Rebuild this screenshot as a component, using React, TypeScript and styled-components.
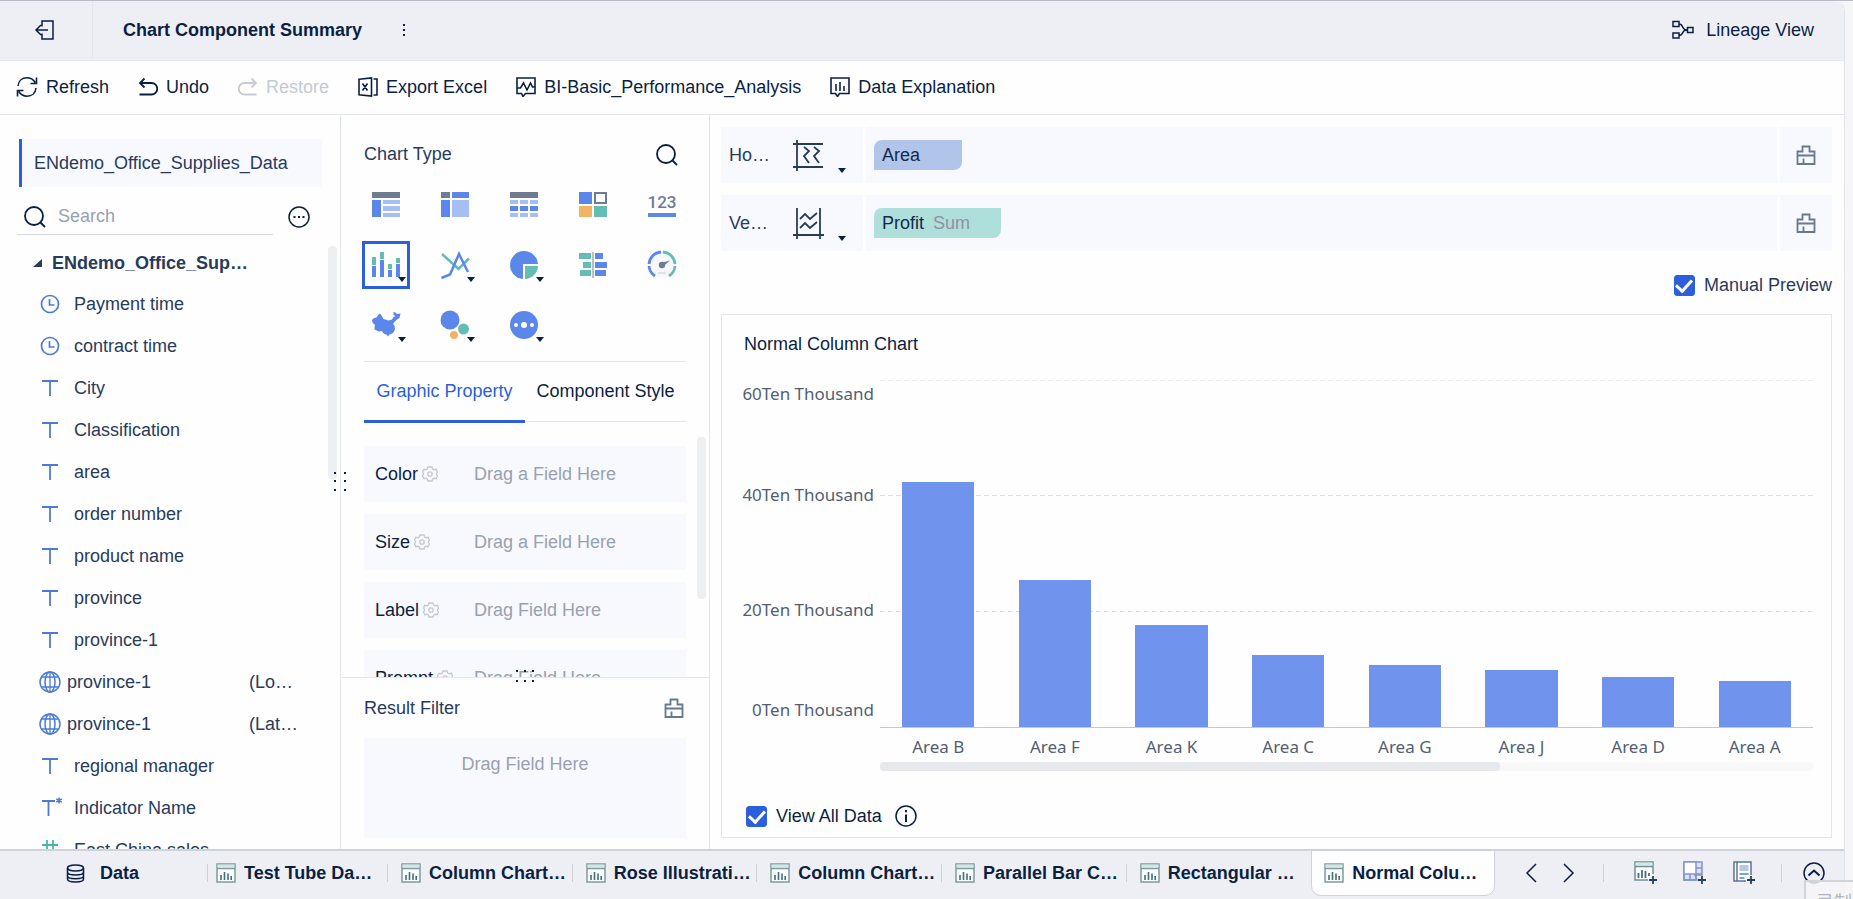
import React from "react";
import styled, { createGlobalStyle, css } from "styled-components";

const ink = "#0b1f43";
const inkSoft = "#283b5b";
const blue = "#2b5fdb";
const muted = "#98a1b2";
const line = "#e3e5ef";
const field = "#f8f9fe";
const bar = "#eeeff5";
const steel = "#68788f";

const GlobalStyle = createGlobalStyle`
  * { box-sizing: border-box; }
  body {
    margin: 0;
    background: #f6f6f8;
    color: ${inkSoft};
    font: 18px/24px "Liberation Sans", Arial, sans-serif;
  }
  button, input { font: inherit; color: inherit; }
  button { padding: 0; border: 0; background: none; cursor: pointer; }
  svg { display: block; flex: none; }
`;

/* ---------- frame ---------- */

const Page = styled.div`
  height: 100vh;
  min-height: 700px;
  border-top: 1px solid #b9bac6;
  padding-right: 8px;
  overflow: hidden;
  position: relative;
`;

const Frame = styled.div`
  height: 100%;
  display: flex;
  flex-direction: column;
  background: #fefefe;
  border-right: 1px solid #e2e3ea;
  border-top-right-radius: 10px;
  overflow: hidden;
`;

const Header = styled.header`
  flex: none;
  display: flex;
  align-items: center;
  height: 60px;
  padding-bottom: 2px;
  background: ${bar};
  border-bottom: 1px solid ${line};
  color: ${ink};
`;

const ExitButton = styled.button`
  display: flex;
  align-items: center;
  align-self: stretch;
  width: 93px;
  padding-left: 34px;
  border-right: 1px solid ${line};
`;

const PageTitle = styled.h1`
  margin: 0 36px 0 30px;
  font-size: 18px;
  line-height: 24px;
`;

const LineageLink = styled.a`
  display: flex;
  align-items: center;
  gap: 12px;
  margin-left: auto;
  margin-right: 30px;
  color: inherit;
  text-decoration: none;
`;

const Toolbar = styled.nav`
  flex: none;
  display: flex;
  align-items: center;
  gap: 29px;
  height: 54px;
  padding-left: 16px;
  padding-bottom: 2px;
  border-bottom: 1px solid ${line};
  color: ${ink};
`;

const ToolButton = styled.button`
  display: flex;
  align-items: center;
  gap: 8px;
  white-space: nowrap;
  &:disabled { color: #c5cad4; }
`;

const Body = styled.div`
  flex: 1;
  min-height: 0;
  display: flex;
`;

const DragDots = styled.span<{ $horizontal?: boolean }>`
  position: absolute;
  z-index: 2;
  color: ${ink};
  ${(p) =>
    p.$horizontal
      ? css`left: 50%; bottom: -5px; margin-left: -9px;`
      : css`right: -6px; top: 50%; margin-top: -10px;`}
`;

const Thumb = styled.span<{ $height: string; $top: number; $right: number }>`
  position: absolute;
  top: ${(p) => p.$top}px;
  right: ${(p) => p.$right}px;
  width: 9px;
  height: ${(p) => p.$height};
  border-radius: 4px;
  background: #edeff1;
`;

/* ---------- data panel ---------- */

const DataPanel = styled.aside`
  position: relative;
  flex: none;
  display: flex;
  flex-direction: column;
  width: 341px;
  padding-top: 24px;
  border-right: 1px solid ${line};
`;

const Dataset = styled.button`
  flex: none;
  height: 48px;
  margin: 0 18px 0 19px;
  padding-left: 12px;
  border-left: 3px solid ${blue};
  background: ${field};
  text-align: left;
`;

const SearchRow = styled.div`
  flex: none;
  display: flex;
  align-items: center;
  gap: 14px;
  height: 48px;
  padding: 0 29px 0 17px;
  color: ${ink};
  > button { margin-top: 12px; }
`;

const SearchBox = styled.label`
  flex: 1;
  display: flex;
  align-items: center;
  gap: 12px;
  height: 48px;
  min-width: 0;
  padding-left: 6px;
  padding-top: 11px;
  border-bottom: 1px solid #d9dbe4;
`;

const SearchInput = styled.input`
  flex: 1;
  min-width: 0;
  padding: 0;
  border: 0;
  outline: 0;
  background: none;
  &::placeholder { color: ${muted}; opacity: 1; }
`;

const Tree = styled.div`
  position: relative;
  flex: 1;
  min-height: 0;
  padding-top: 7px;
  overflow: hidden;
`;

const TreeHead = styled.button`
  display: flex;
  align-items: center;
  gap: 10px;
  height: 41px;
  padding-left: 33px;
  font-weight: bold;
`;

const FieldList = styled.ul`
  margin: 0;
  padding: 0;
  list-style: none;
`;

const FieldRow = styled.li<{ $geo?: boolean }>`
  display: flex;
  align-items: center;
  gap: ${(p) => (p.$geo ? 5 : 12)}px;
  height: 42px;
  padding-left: 38px;
`;

const FieldName = styled.span<{ $geo?: boolean }>`
  width: ${(p) => (p.$geo ? "177px" : "auto")};
  white-space: nowrap;
`;

/* ---------- settings panel ---------- */

const Settings = styled.section`
  flex: none;
  display: flex;
  flex-direction: column;
  width: 369px;
  border-right: 1px solid ${line};
`;

const PropertyArea = styled.div`
  position: relative;
  flex: 1;
  display: flex;
  flex-direction: column;
  min-height: 0;
  padding: 27px 23px 0;
  border-bottom: 1px solid ${line};
`;

const PanelHead = styled.div<{ $inset?: number }>`
  flex: none;
  display: flex;
  align-items: center;
  justify-content: space-between;
  padding-right: ${(p) => p.$inset ?? 0}px;
  color: ${inkSoft};
`;

const PanelTitle = styled.h2`
  margin: 0;
  font-size: 18px;
  line-height: 24px;
  font-weight: normal;
`;

const IconButton = styled.button<{ $tone?: string }>`
  display: grid;
  place-items: center;
  width: 24px;
  height: 24px;
  color: ${(p) => p.$tone ?? ink};
`;

const ChartTypes = styled.div`
  flex: none;
  display: grid;
  grid-template-columns: repeat(5, 48px);
  column-gap: 21px;
  row-gap: 12px;
  margin: 15px -2px 0;
  padding-bottom: 12px;
`;

const ChartType = styled.button<{ $active?: boolean }>`
  position: relative;
  display: grid;
  place-items: center;
  height: 48px;
  box-shadow: ${(p) => (p.$active ? `inset 0 0 0 3px ${blue}` : "none")};
`;

const CornerCaret = styled.span`
  position: absolute;
  right: 4px;
  bottom: 7px;
  border: 4px solid transparent;
  border-top: 5px solid ${ink};
  border-bottom: 0;
`;

const Tabs = styled.div`
  flex: none;
  display: grid;
  grid-template-columns: 1fr 1fr;
  height: 61px;
  border-top: 1px solid ${line};
  border-bottom: 1px solid ${line};
`;

const Tab = styled.button<{ $active?: boolean }>`
  height: 61px;
  border-bottom: 3px solid ${(p) => (p.$active ? blue : "transparent")};
  color: ${(p) => (p.$active ? blue : ink)};
  white-space: nowrap;
`;

const Properties = styled.div`
  flex: 1;
  min-height: 0;
  display: flex;
  flex-direction: column;
  gap: 12px;
  padding-top: 24px;
  overflow: hidden;
`;

const Property = styled.div`
  flex: none;
  display: flex;
  align-items: center;
  height: 56px;
  padding-left: 11px;
  background: ${field};
`;

const PropertyName = styled.span`
  display: flex;
  align-items: center;
  gap: 4px;
  width: 99px;
  color: ${ink};
`;

const Placeholder = styled.span`
  color: ${muted};
`;

const FilterArea = styled.div`
  flex: none;
  padding: 18px 23px 11px;
`;

const FilterDrop = styled.div`
  height: 100px;
  margin-top: 18px;
  padding-top: 14px;
  background: ${field};
  text-align: center;
`;

/* ---------- canvas ---------- */

const Canvas = styled.main`
  flex: 1;
  min-width: 0;
  display: flex;
  flex-direction: column;
  padding: 12px 12px 11px 11px;
`;

const AxisRow = styled.div`
  flex: none;
  display: grid;
  grid-template-columns: 142px 1fr 52px;
  gap: 3px;
  height: 56px;
  margin-bottom: 12px;
`;

const AxisCell = styled.div`
  display: flex;
  align-items: center;
  min-width: 0;
  padding: 0 8px;
  background: ${field};
`;

const AxisName = styled.span`
  width: 63px;
`;

const AxisMenu = styled.button`
  display: flex;
  align-items: flex-end;
  gap: 14px;
  color: ${inkSoft};
`;

const Caret = styled.span`
  margin-bottom: -2px;
  border: 4px solid transparent;
  border-top: 5px solid ${ink};
  border-bottom: 0;
`;

const ClearCell = styled.button`
  display: grid;
  place-items: center;
  background: ${field};
  color: ${steel};
`;

const Chip = styled.button<{ $tone: string; $width: number }>`
  width: ${(p) => p.$width}px;
  height: 30px;
  padding-left: 8px;
  border-radius: 8px 0 8px 0;
  background: ${(p) => p.$tone};
  color: #16294b;
  text-align: left;
`;

const ChipNote = styled.span`
  margin-left: 9px;
  color: #8d92a3;
`;

const PreviewRow = styled.div`
  flex: none;
  display: flex;
  justify-content: flex-end;
  align-items: center;
  height: 44px;
  margin-bottom: 7px;
`;

const CheckLabel = styled.label`
  display: flex;
  align-items: center;
  gap: 9px;
`;

const Check = styled.input.attrs({ type: "checkbox" })`
  appearance: none;
  display: grid;
  place-items: center;
  width: 21px;
  height: 21px;
  margin: 0;
  border: 1px solid ${blue};
  border-radius: 3px;
  &:checked { background: ${blue}; }
  &:checked::after {
    content: "";
    width: 7px;
    height: 13px;
    margin-bottom: 4px;
    border: solid #fff;
    border-width: 0 3px 3px 0;
    transform: rotate(42deg);
  }
`;

const Card = styled.section`
  flex: 1;
  min-height: 0;
  display: flex;
  flex-direction: column;
  padding: 17px 18px 9px 22px;
  border: 1px solid ${line};
  color: ${ink};
`;

const ChartGrid = styled.div`
  flex: 1;
  min-height: 0;
  display: grid;
  grid-template-columns: 130px 1fr;
  grid-template-rows: 1fr 35px 9px;
  column-gap: 6px;
  margin: 24px 0 33px;
  color: #535e72;
  font: 17px/24px "Noto Sans", "Open Sans", sans-serif;
`;

const ChartSvg = styled.svg`
  width: 100%;
  height: 100%;
  overflow: visible;
`;

const Categories = styled.div`
  grid-column: 2;
  display: grid;
  grid-template-columns: repeat(8, 1fr);
  padding-top: 8px;
  text-align: center;
`;

const ScrollTrack = styled.div`
  grid-column: 2;
  border-radius: 4px;
  background: #f8f8f9;
`;

const ScrollThumb = styled.div`
  width: 66.5%;
  height: 9px;
  border-radius: 4px;
  background: #e6e8ec;
`;

const CardFoot = styled.div`
  display: flex;
  align-items: center;
  gap: 12px;
  height: 24px;
  padding-left: 2px;
`;

/* ---------- sheet bar ---------- */

const SheetBar = styled.footer`
  flex: none;
  display: flex;
  height: 50px;
  border-top: 2px solid #cdd2dc;
  background: ${bar};
  color: ${ink};
`;

const DataSheet = styled.button`
  display: flex;
  align-items: center;
  gap: 15px;
  width: 207px;
  padding-left: 66px;
  padding-bottom: 4px;
  font-weight: bold;
`;

const Sheets = styled.div`
  flex: 1;
  min-width: 0;
  display: grid;
  grid-template-columns: 180px repeat(6, minmax(0, 1fr));
`;

const Sheet = styled.button<{ $first?: boolean; $active?: boolean }>`
  display: flex;
  align-items: center;
  gap: 8px;
  min-width: 0;
  padding: 0 0 4px;
  font-weight: bold;
  white-space: nowrap;
  &::before {
    content: "";
    width: 1px;
    height: 18px;
    margin-right: ${(p) => (p.$first ? 0 : 5)}px;
    background: #cdd0d9;
  }
  ${(p) =>
    p.$active &&
    css`
      height: 46px;
      margin-top: -1px;
      margin-left: 1px;
      padding: 0 0 0 3px;
      border: 1px solid #cdd2dc;
      border-radius: 0 0 10px 10px;
      background: #fefefe;
      &::before { margin-right: 0; background: none; }
    `}
`;

const SheetTools = styled.div`
  display: flex;
  align-items: center;
  width: 349px;
  padding: 0 0 4px 25px;
`;

const ToolGroup = styled.div<{ $gap: number }>`
  display: flex;
  gap: ${(p) => p.$gap}px;
`;

const Divider = styled.span<{ $before: number; $after: number }>`
  width: 1px;
  height: 18px;
  margin: 0 ${(p) => p.$after}px 0 ${(p) => p.$before}px;
  background: #cdd0d9;
`;

const Recorder = styled.div`
  position: absolute;
  right: 0;
  bottom: 0;
  width: 49px;
  height: 19px;
  padding: 9px 0 0 10px;
  border-top: 2px solid #d3d4da;
  border-left: 2px solid #d3d4da;
  background: rgba(246, 246, 247, 0.8);
  color: #b4b6be;
  font: 18px/20px "Noto Sans CJK SC", sans-serif;
  white-space: nowrap;
  overflow: hidden;
`;

/* ---------- icons ---------- */

type StrokeProps = { size?: number; width?: number; box?: number; children: React.ReactNode };
const Stroke = ({ size = 20, width = 2, box = size, children }: StrokeProps) => (
  <svg width={size} height={size} viewBox={`0 0 ${box} ${box}`} fill="none" stroke="currentColor" strokeWidth={width} aria-hidden="true">
    {children}
  </svg>
);

const ExitIcon = () => (
  <Stroke width={1.5}>
    <path d="M8 6.5V1h11v18H8v-5.5M14 10H2M7 5l-5 5 5 5" />
  </Stroke>
);
const LineageIcon = () => (
  <Stroke size={22} width={1.5}>
    <path d="M1 2.5h6v5H1zM1 14h6v5H1zM15.500 8.500h5.500v5h-5.500zM7 5c5 0 2 6 8 6M7 16.500c5 0 2-5.500 8-5.500" />
  </Stroke>
);
const RefreshIcon = () => (
  <Stroke size={22} width={1.6}>
    <path d="M2 10C2.500 5 6 1.800 11 1.800c3.500 0 6.500 2 8.200 4.700M20.500 1.500v6h-6M20 12c-.5 5-4 8.200-9 8.200-3.500 0-6.500-2-8.200-4.700M1.500 20.500v-6h6" />
  </Stroke>
);
const UndoIcon = () => (
  <Stroke width={1.8}>
    <path d="M6.500 1.500 2 6l4.500 4.500M2 6h11.500a5.700 5.700 0 0 1 0 11.500H1.500" />
  </Stroke>
);
const RedoIcon = () => (
  <Stroke width={1.8}>
    <path d="M13.500 1.500 18 6l-4.500 4.500M18 6H6.500a5.700 5.700 0 0 0 0 11.500h12" />
  </Stroke>
);
const ExcelIcon = () => (
  <Stroke width={1.6}>
    <path d="M1 2.200 13.500 1v18L1 17.800zM15.500 2h3.500v16h-3.500M4.500 6.500l5 7M9.500 6.500l-5 7" />
  </Stroke>
);
const BiIcon = () => (
  <Stroke width={1.6}>
    <path d="M1 1h18v15.500h-9.500l-2.500 3-1.500-3H1zM1 11h3.500l3-5 3.500 7 3.500-7 2 4H19" />
  </Stroke>
);
const ExplainIcon = () => (
  <Stroke width={1.6}>
    <path d="M1 1h18v15.500h-9.500l-2 3-2-3H1zM6 7v7M10 5v9M14 9v5" />
  </Stroke>
);
const SearchIcon = () => (
  <Stroke size={23} width={1.8}>
    <circle cx="11" cy="11" r="9" />
    <path d="m17 17 5 5" />
  </Stroke>
);
const EllipsisIcon = () => (
  <Stroke size={22} width={1.5}>
    <circle cx="11" cy="11" r="10" />
    <path d="M5.500 11h2M10 11h2M14.500 11h2" strokeWidth="2" />
  </Stroke>
);
const InfoIcon = () => (
  <Stroke size={22} width={1.5}>
    <circle cx="11" cy="11" r="10" />
    <path d="M11 9.500V17M11 5v2.200" strokeWidth="2" />
  </Stroke>
);
const BroomIcon = () => (
  <Stroke width={1.8}>
    <path d="M1.500 6.500h5V1.500h7v5h5V19h-17zM1.500 10.500h17M7.500 19v-5.500" />
  </Stroke>
);
const GearIcon = () => (
  <svg width="16" height="16" viewBox="0 0 16 16" fill="none" stroke="#c3c8d2" strokeWidth="1.3" aria-hidden="true">
    <path d="M6 1h4l.7 2 1.300.700 2.200-.4L15.500 6 14.300 8l1.200 2-1.300 2.700-2.200-.4-1.300.700L10 15H6l-.7-2-1.300-.7-2.200.4L.5 10l1.200-2L.5 6l1.300-2.700 2.200.4L5.300 3z" />
    <circle cx="8" cy="8" r="2.200" />
  </svg>
);
const ClockIcon = () => (
  <Stroke size={24} width={1.7}>
    <circle cx="12" cy="12" r="8.500" />
    <path d="M11.500 7v6h5" />
  </Stroke>
);
const TextIcon = () => (
  <Stroke size={24} width={1.8}>
    <path d="M4 5h16M12 5v15" />
  </Stroke>
);
const TextStarIcon = () => (
  <Stroke size={24} width={1.8}>
    <path d="M4 5h13M10.500 5v15" />
    <path d="M21 1.500v6M18.300 3l5.400 3M23.700 3l-5.400 3" strokeWidth="1.500" />
  </Stroke>
);
const GlobeIcon = () => (
  <Stroke size={24} width={1.5}>
    <circle cx="12" cy="12" r="10" />
    <ellipse cx="12" cy="12" rx="5" ry="10" />
    <path d="M12 2v20M3.500 7h17M3.500 17h17" strokeWidth="1.300" />
  </Stroke>
);
const NumberIcon = () => (
  <Stroke size={24} width={1.8}>
    <path d="M4 7h16M4 15h16M9 2v18M15 2v18" />
  </Stroke>
);
const DatabaseIcon = () => (
  <Stroke size={19} width={1.5}>
    <ellipse cx="9.500" cy="4" rx="8" ry="3" />
    <path d="M1.500 4v11c0 1.700 3.500 3 8 3s8-1.300 8-3V4M1.500 8c0 1.700 3.500 3 8 3s8-1.300 8-3M1.500 11.700c0 1.700 3.500 3 8 3s8-1.300 8-3" />
  </Stroke>
);
const SheetIcon = () => (
  <svg width="20" height="20" viewBox="0 0 20 20" fill="none" stroke="#7d9a9f" strokeWidth="1.500" aria-hidden="true">
    <path d="M1 1h18v18H1z" fill="#fafcfc" />
    <path d="M1.500 1.500h17v3h-17z" fill="#d5e6e6" stroke="none" />
    <path d="M1 5.500h18" />
    <path d="M5 12v5M8.500 9v8M12 10.500V17M15.200 13v4" stroke="#456f7b" strokeWidth="1.600" />
  </svg>
);
const Plus = () => <path d="M15 19h8M19 15v8" stroke="#263e63" strokeWidth="1.800" />;
const AddChartIcon = () => (
  <svg width="24" height="24" viewBox="0 0 24 24" fill="none" stroke="#6f9095" strokeWidth="1.500" aria-hidden="true">
    <path d="M14 19H1V1h18v12" fill="#fafcfc" />
    <path d="M1.500 1.500h17v3h-17z" fill="#d5e6e6" stroke="none" />
    <path d="M1 5.500h18" />
    <path d="M4.500 12v5M8 9v8M11.500 10v7M15 12v3" stroke="#456f7b" strokeWidth="1.800" />
    <Plus />
  </svg>
);
const AddBoardIcon = () => (
  <svg width="24" height="24" viewBox="0 0 24 24" fill="none" stroke="#8593c8" strokeWidth="1.500" aria-hidden="true">
    <path d="M14 19H1V1h18v13H12z" fill="#d9e2f5" />
    <path d="M1 1h12v12H1z" fill="#fff" />
    <path d="M13 7h6M13 13h6M7 13v6M13 13v6M1 13v6h12" />
    <Plus />
  </svg>
);
const AddReportIcon = () => (
  <svg width="24" height="24" viewBox="0 0 24 24" fill="none" stroke="#5e7391" strokeWidth="1.500" aria-hidden="true">
    <path d="M14 20H2V1h17v13" fill="#fff" />
    <path d="M5 1v19" />
    <path d="M7.500 4h9v6h-9z" fill="#b2c7ec" stroke="none" />
    <path d="M7.500 13h9M7.500 17h5" stroke="#4d80dc" strokeWidth="1.600" />
    <Plus />
  </svg>
);

const tileBlue = "#5b86ea";
const tilePale = "#a5bef5";
const tileGrey = "#6e7b91";
const tileTeal = "#64bcb4";
const tileAmber = "#f4b266";

const Rects = ({ fill, items }: { fill: string; items: number[][] }) => (
  <g fill={fill}>
    {items.map(([x, y, w, h]) => (
      <rect key={`${x}-${y}`} x={x} y={y} width={w} height={h} />
    ))}
  </g>
);

const chartTypes: { name: string; menu?: boolean; art: React.ReactNode }[] = [
  {
    name: "Group table",
    art: (
      <>
        <Rects fill={tileGrey} items={[[1, 2, 28, 6]]} />
        <Rects fill={tileBlue} items={[[1, 10, 9, 17]]} />
        <Rects fill={tilePale} items={[[12, 10, 17, 4], [12, 16, 17, 5], [12, 23, 17, 4]]} />
      </>
    ),
  },
  {
    name: "Cross table",
    art: (
      <>
        <Rects fill={tileGrey} items={[[1, 2, 9, 6]]} />
        <Rects fill={tileBlue} items={[[12, 2, 17, 6], [1, 10, 9, 17]]} />
        <Rects fill={tilePale} items={[[12, 10, 17, 17]]} />
      </>
    ),
  },
  {
    name: "Detail table",
    art: (
      <>
        <Rects fill={tileGrey} items={[[1, 2, 28, 6]]} />
        <Rects fill={tilePale} items={[[1, 10, 8, 4], [11, 10, 8, 4], [21, 10, 8, 4], [1, 23, 8, 4], [11, 23, 8, 4], [21, 23, 8, 4]]} />
        <Rects fill={tileBlue} items={[[1, 16, 8, 5], [11, 16, 8, 5], [21, 16, 8, 5]]} />
      </>
    ),
  },
  {
    name: "Color table",
    art: (
      <>
        <Rects fill={tileBlue} items={[[1, 2, 13, 12]]} />
        <Rects fill={tileAmber} items={[[1, 16, 13, 11]]} />
        <Rects fill={tileTeal} items={[[16, 16, 13, 11]]} />
        <rect x="17" y="3" width="11" height="10" fill="none" stroke={tileGrey} strokeWidth="2" />
      </>
    ),
  },
  {
    name: "KPI card",
    art: (
      <>
        <text x="15" y="18" textAnchor="middle" fill={tileGrey} fontFamily="Roboto, sans-serif" fontSize="17" fontWeight="500">123</text>
        <Rects fill={tileBlue} items={[[1, 23, 28, 4]]} />
      </>
    ),
  },
  {
    name: "Column chart",
    menu: true,
    art: (
      <>
        <Rects fill={tileTeal} items={[[1, 7, 4, 8], [9, 2, 4, 7], [17, 14, 4, 5], [25, 8, 4, 5]]} />
        <Rects fill={tileBlue} items={[[1, 16, 4, 11], [9, 10, 4, 17], [17, 20, 4, 7], [25, 14, 4, 13]]} />
      </>
    ),
  },
  {
    name: "Line chart",
    menu: true,
    art: (
      <g fill="none" strokeWidth="2.500">
        <path d="M2 4l16.500 15L29 8.500" stroke={tileTeal} />
        <path d="M1.500 28l8.500-3.500L19 4l9 18" stroke={tileBlue} />
      </g>
    ),
  },
  {
    name: "Pie chart",
    menu: true,
    art: (
      <>
        <path d="M14 29A14 14 0 1 1 29 14H14z" fill={tileBlue} />
        <path d="M16 16h13a13.500 13.500 0 0 1-13 13z" fill={tileTeal} />
      </>
    ),
  },
  {
    name: "Butterfly chart",
    art: (
      <>
        <Rects fill={tileTeal} items={[[1, 3, 12, 6], [5, 12, 8, 6], [2, 20, 11, 6]]} />
        <Rects fill={tileBlue} items={[[17, 3, 8, 6], [17, 12, 12, 6], [17, 20, 11, 6]]} />
        <Rects fill="#b9bec9" items={[[14, 2, 2, 26]]} />
      </>
    ),
  },
  {
    name: "Gauge",
    art: (
      <>
        <circle cx="15" cy="15" r="13" fill="#f6f7f9" />
        <g fill="none" strokeWidth="2.800">
          <path d="M14 2A13 13 0 0 0 2 14M2 16a13 13 0 0 0 6 10" stroke={tileBlue} />
          <path d="M16 2a13 13 0 0 1 12 12M28 16a13 13 0 0 1-6 10" stroke={tileTeal} />
        </g>
        <circle cx="15" cy="15" r="3.200" fill={tileGrey} />
        <path d="M14 13l9-2.500-7 6z" fill={tileGrey} />
        <path d="M11 23h8" stroke="#d9dce2" strokeWidth="1.500" />
      </>
    ),
  },
  {
    name: "Map",
    menu: true,
    art: (
      <path
        d="M1 10l2-2 2.500-.5L7 5l2-1.500 1.500 2 2 3.500 5 1.500 3.500-1 1.500-2.500 2-1-2-1L22.500 2l2 .5 1.500 1.500 3.500-.5L28.500 8l-2.500 1.500-3 3-1 1.500 1.500 1.500.5 4-2 3.500-3.500 1.500-1.500 2-1-1.500-3.500-1.500-1.500-2.500-3 .5-4.500-2L3.500 17l.5-2-2.500-2.500z"
        fill={tileBlue}
      />
    ),
  },
  {
    name: "Bubble chart",
    menu: true,
    art: (
      <>
        <circle cx="10" cy="10" r="9.500" fill={tileBlue} />
        <circle cx="23.500" cy="19" r="5.500" fill={tileTeal} />
        <circle cx="14" cy="25" r="4" fill={tileAmber} />
      </>
    ),
  },
  {
    name: "More",
    menu: true,
    art: (
      <>
        <circle cx="15" cy="15" r="14" fill={tileBlue} />
        <g fill="#fff">
          <circle cx="7" cy="15" r="2" />
          <circle cx="15" cy="15" r="3" />
          <circle cx="23" cy="15" r="2" />
        </g>
      </>
    ),
  },
];

/* ---------- data ---------- */

const fieldIcons = {
  time: <ClockIcon />,
  text: <TextIcon />,
  geo: <GlobeIcon />,
  star: <TextStarIcon />,
  number: <NumberIcon />,
};

const fields: { kind: keyof typeof fieldIcons; name: string; note?: string }[] = [
  { kind: "time", name: "Payment time" },
  { kind: "time", name: "contract time" },
  { kind: "text", name: "City" },
  { kind: "text", name: "Classification" },
  { kind: "text", name: "area" },
  { kind: "text", name: "order number" },
  { kind: "text", name: "product name" },
  { kind: "text", name: "province" },
  { kind: "text", name: "province-1" },
  { kind: "geo", name: "province-1", note: "(Lo…" },
  { kind: "geo", name: "province-1", note: "(Lat…" },
  { kind: "text", name: "regional manager" },
  { kind: "star", name: "Indicator Name" },
  { kind: "number", name: "East China sales" },
];

const FieldIcon = styled.span<{ $number?: boolean }>`
  color: ${(p) => (p.$number ? "#47b3ae" : "#4d7bd3")};
`;

const properties = [
  { name: "Color", hint: "Drag a Field Here" },
  { name: "Size", hint: "Drag a Field Here" },
  { name: "Label", hint: "Drag Field Here" },
  { name: "Prompt", hint: "Drag Field Here" },
];

const columns = [
  { area: "Area B", value: 42.4 },
  { area: "Area F", value: 25.5 },
  { area: "Area K", value: 17.7 },
  { area: "Area C", value: 12.5 },
  { area: "Area G", value: 10.7 },
  { area: "Area J", value: 9.9 },
  { area: "Area D", value: 8.7 },
  { area: "Area A", value: 7.9 },
];
const axisMax = 60;

const axisLabels = [
  { value: 60, shift: 20 },
  { value: 40, shift: 5 },
  { value: 20, shift: 5 },
  { value: 0, shift: -11 },
];

const sheets = [
  "Test Tube Da…",
  "Column Chart…",
  "Rose Illustrati…",
  "Column Chart…",
  "Parallel Bar C…",
  "Rectangular …",
  "Normal Colu…",
];

const percent = (n: number) => `${n * 100}%`;

const ColumnChart = () => (
  <ChartGrid>
    <ChartSvg>
      {axisLabels.map((l) => (
        <text key={l.value} x="100%" y={percent(1 - l.value / axisMax)} dy={l.shift} textAnchor="end" fill="currentColor">
          {l.value}Ten Thousand
        </text>
      ))}
    </ChartSvg>
    <ChartSvg shapeRendering="crispEdges">
      {[60, 40, 20].map((v) => (
        <line
          key={v}
          x1="0"
          x2="100%"
          y1={percent(1 - v / axisMax)}
          y2={percent(1 - v / axisMax)}
          stroke={v === 60 ? "#ededee" : "#dcdddf"}
          strokeDasharray="5 3"
        />
      ))}
      {columns.map((c, i) => (
        <rect
          key={c.area}
          x={percent((i + 0.19) / columns.length)}
          y={percent(1 - c.value / axisMax)}
          width={percent(0.62 / columns.length)}
          height={percent(c.value / axisMax)}
          fill="#7094ed"
        />
      ))}
      <line x1="0" x2="100%" y1="100%" y2="100%" stroke="#c6c8cd" />
    </ChartSvg>
    <Categories>
      {columns.map((c) => (
        <span key={c.area}>{c.area}</span>
      ))}
    </Categories>
    <ScrollTrack>
      <ScrollThumb />
    </ScrollTrack>
  </ChartGrid>
);

export default function App() {
  return (
    <Page>
      <GlobalStyle />
      <Frame>
        <Header>
          <ExitButton aria-label="Exit">
            <ExitIcon />
          </ExitButton>
          <PageTitle>Chart Component Summary</PageTitle>
          <button aria-label="More actions">
            <svg width="12" height="16" viewBox="0 0 12 16" fill={ink} aria-hidden="true">
              <path d="M5 2h2v2H5zM5 7h2v2H5zM5 12h2v2H5z" />
            </svg>
          </button>
          <LineageLink href="#lineage">
            <LineageIcon />
            Lineage View
          </LineageLink>
        </Header>

        <Toolbar>
          <ToolButton><RefreshIcon />Refresh</ToolButton>
          <ToolButton><UndoIcon />Undo</ToolButton>
          <ToolButton disabled><RedoIcon />Restore</ToolButton>
          <ToolButton><ExcelIcon />Export Excel</ToolButton>
          <ToolButton><BiIcon />BI-Basic_Performance_Analysis</ToolButton>
          <ToolButton><ExplainIcon />Data Explanation</ToolButton>
        </Toolbar>

        <Body>
          <DataPanel>
            <Dataset>ENdemo_Office_Supplies_Data</Dataset>
            <SearchRow>
              <SearchBox>
                <SearchIcon />
                <SearchInput placeholder="Search" aria-label="Search fields" />
              </SearchBox>
              <IconButton aria-label="Field options">
                <EllipsisIcon />
              </IconButton>
            </SearchRow>
            <Tree>
              <TreeHead>
                <svg width="9" height="8" viewBox="0 0 9 8" fill={inkSoft} aria-hidden="true">
                  <path d="M9 0v8H0z" />
                </svg>
                ENdemo_Office_Sup…
              </TreeHead>
              <FieldList>
                {fields.map((f, i) => (
                  <FieldRow key={i} $geo={f.kind === "geo"}>
                    <FieldIcon $number={f.kind === "number"}>{fieldIcons[f.kind]}</FieldIcon>
                    <FieldName $geo={f.kind === "geo"}>{f.name}</FieldName>
                    {f.note && <span>{f.note}</span>}
                  </FieldRow>
                ))}
              </FieldList>
              <Thumb $top={11} $right={3} $height="38%" />
            </Tree>
            <DragDots>
              <svg width="12" height="19" viewBox="0 0 12 19" fill="currentColor" aria-hidden="true">
                <path d="M0 0h2v2H0zM10 0h2v2h-2zM0 8h2v2H0zM10 8h2v2h-2zM0 17h2v2H0zM10 17h2v2h-2z" />
              </svg>
            </DragDots>
          </DataPanel>

          <Settings>
            <PropertyArea>
              <PanelHead $inset={8}>
                <PanelTitle>Chart Type</PanelTitle>
                <IconButton aria-label="Search chart types">
                  <SearchIcon />
                </IconButton>
              </PanelHead>
              <ChartTypes>
                {chartTypes.map((t) => (
                  <ChartType key={t.name} aria-label={t.name} $active={t.name === "Column chart"}>
                    <svg width="30" height="30" viewBox="0 0 30 30" aria-hidden="true">
                      {t.art}
                    </svg>
                    {t.menu && <CornerCaret />}
                  </ChartType>
                ))}
              </ChartTypes>
              <Tabs>
                <Tab $active>Graphic Property</Tab>
                <Tab>Component Style</Tab>
              </Tabs>
              <Properties>
                {properties.map((p) => (
                  <Property key={p.name}>
                    <PropertyName>
                      {p.name}
                      <GearIcon />
                    </PropertyName>
                    <Placeholder>{p.hint}</Placeholder>
                  </Property>
                ))}
              </Properties>
              <Thumb $top={322} $right={3} $height="162px" />
              <DragDots $horizontal>
                <svg width="18" height="12" viewBox="0 0 18 12" fill="currentColor" aria-hidden="true">
                  <path d="M0 0h2v2H0zM0 10h2v2H0zM8 0h2v2H8zM8 10h2v2H8zM16 0h2v2h-2zM16 10h2v2h-2z" />
                </svg>
              </DragDots>
            </PropertyArea>
            <FilterArea>
              <PanelHead>
                <PanelTitle>Result Filter</PanelTitle>
                <IconButton aria-label="Clear filter" $tone={steel}>
                  <BroomIcon />
                </IconButton>
              </PanelHead>
              <FilterDrop>
                <Placeholder>Drag Field Here</Placeholder>
              </FilterDrop>
            </FilterArea>
          </Settings>

          <Canvas>
            <AxisRow>
              <AxisCell>
                <AxisName>Ho…</AxisName>
                <AxisMenu aria-label="Horizontal axis options">
                  <Stroke size={32} width={1.8}>
                    <path d="M5 1v31M1 5h30M1 28h30M12 8l5 4-5 5 5 7M22 8l5 4-5 5 5 7" />
                  </Stroke>
                  <Caret />
                </AxisMenu>
              </AxisCell>
              <AxisCell>
                <Chip $tone="#b0c5e9" $width={88}>Area</Chip>
              </AxisCell>
              <ClearCell aria-label="Clear horizontal axis"><BroomIcon /></ClearCell>
            </AxisRow>
            <AxisRow>
              <AxisCell>
                <AxisName>Ve…</AxisName>
                <AxisMenu aria-label="Vertical axis options">
                  <Stroke size={32} width={1.8}>
                    <path d="M5 1v31M28 1v31M1 28h31M8 12l5-5 5 5 7-6M8 21l5-5 5 5 7-6" />
                  </Stroke>
                  <Caret />
                </AxisMenu>
              </AxisCell>
              <AxisCell>
                <Chip $tone="#afdfda" $width={127}>
                  Profit<ChipNote>Sum</ChipNote>
                </Chip>
              </AxisCell>
              <ClearCell aria-label="Clear vertical axis"><BroomIcon /></ClearCell>
            </AxisRow>
            <PreviewRow>
              <CheckLabel>
                <Check defaultChecked />
                Manual Preview
              </CheckLabel>
            </PreviewRow>
            <Card>
              <PanelTitle>Normal Column Chart</PanelTitle>
              <ColumnChart />
              <CardFoot>
                <CheckLabel>
                  <Check defaultChecked />
                  View All Data
                </CheckLabel>
                <IconButton aria-label="About view all data">
                  <InfoIcon />
                </IconButton>
              </CardFoot>
            </Card>
          </Canvas>
        </Body>

        <SheetBar>
          <DataSheet><DatabaseIcon />Data</DataSheet>
          <Sheets>
            {sheets.map((name, i) => (
              <Sheet key={i} $first={i === 0} $active={i === sheets.length - 1}>
                <SheetIcon />
                {name}
              </Sheet>
            ))}
          </Sheets>
          <SheetTools>
            <ToolGroup $gap={12}>
              <IconButton aria-label="Previous"><Stroke size={24} width={1.5}><path d="m16 3-9 9 9 9" /></Stroke></IconButton>
              <IconButton aria-label="Next"><Stroke size={24} width={1.5}><path d="m8 3 9 9-9 9" /></Stroke></IconButton>
            </ToolGroup>
            <Divider $before={23} $after={30} />
            <ToolGroup $gap={25}>
              <IconButton aria-label="Add component"><AddChartIcon /></IconButton>
              <IconButton aria-label="Add dashboard"><AddBoardIcon /></IconButton>
              <IconButton aria-label="Add report"><AddReportIcon /></IconButton>
            </ToolGroup>
            <Divider $before={25} $after={20} />
            <IconButton aria-label="Expand">
              <Stroke size={24} width={1.5}>
                <circle cx="12" cy="12" r="10" />
                <path d="m6.500 14.500 5.500-5 5.500 5" strokeWidth="2" />
              </Stroke>
            </IconButton>
          </SheetTools>
        </SheetBar>
      </Frame>
      <Recorder>录制</Recorder>
    </Page>
  );
}
